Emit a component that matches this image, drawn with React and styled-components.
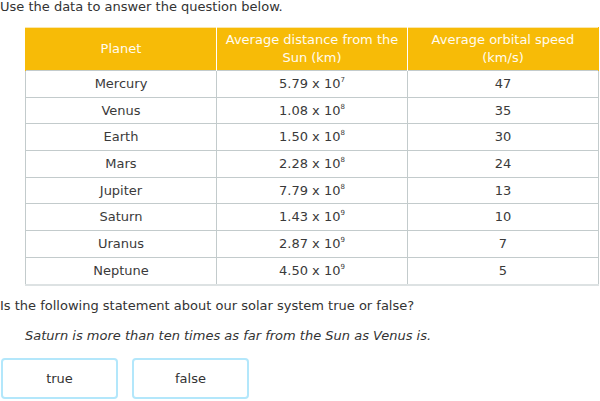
import React from "react";
import styled, { createGlobalStyle } from "styled-components";

const Global = createGlobalStyle`
  html, body { margin: 0; padding: 0; background: #fff; }
  body { font-family: "DejaVu Sans", Verdana, sans-serif; color: #333; }
`;

const Page = styled.div`
  width: 600px;
  height: 401px;
  overflow: hidden;
  font-size: 13px;
`;

const Prompt = styled.p`
  margin: 0;
  margin-top: -2px;
  line-height: 17px;
  padding-left: 0;
`;

const Table = styled.table`
  margin: 12px 0 0 25px;
  width: 574px;
  border-collapse: collapse;
  table-layout: fixed;
  border-bottom: 2px solid #dde2e3;
`;

const HeadCell = styled.th`
  background: #f7bb07;
  color: #fffcf0;
  font-weight: normal;
  height: 42px;
  padding: 0 8px;
  line-height: 18px;
  text-align: center;
  vertical-align: middle;
  border-top: 1px solid #fbe7ad;
  border-left: 1px solid #f7bb07;
  border-right: 1px solid ${(p) => (p.$last ? "#f7bb07" : "#fff")};
`;

const Cell = styled.td`
  height: 25.7px;
  padding: 0;
  text-align: center;
  vertical-align: middle;
  border: 1px solid #c3cbcc;
  color: #3a3a3a;
  line-height: 16px;
`;

const Sup = styled.sup`
  font-size: 7px;
  vertical-align: 6px;
  line-height: 0;
`;

const Question = styled.p`
  margin: 11px 0 0 0;
  line-height: 18px;
`;

const Statement = styled.p`
  margin: 12px 0 0 25px;
  font-style: italic;
  line-height: 18px;
`;

const Choices = styled.div`
  display: flex;
  gap: 14px;
  margin: 13px 0 0 1px;
`;

const Choice = styled.button`
  width: 117px;
  height: 41px;
  box-sizing: border-box;
  background: #fff;
  border: 2px solid #b3e7fb;
  border-radius: 4px;
  font-family: "DejaVu Sans", Verdana, sans-serif;
  font-size: 13px;
  color: #333;
  padding: 0;
  cursor: pointer;
`;

const rows = [
  ["Mercury", "5.79", "7", "47"],
  ["Venus", "1.08", "8", "35"],
  ["Earth", "1.50", "8", "30"],
  ["Mars", "2.28", "8", "24"],
  ["Jupiter", "7.79", "8", "13"],
  ["Saturn", "1.43", "9", "10"],
  ["Uranus", "2.87", "9", "7"],
  ["Neptune", "4.50", "9", "5"],
];

export default function App() {
  return (
    <Page>
      <Global />
      <Prompt>Use the data to answer the question below.</Prompt>
      <Table>
        <thead>
          <tr>
            <HeadCell>Planet</HeadCell>
            <HeadCell>Average distance from the Sun (km)</HeadCell>
            <HeadCell $last>Average orbital speed (km/s)</HeadCell>
          </tr>
        </thead>
        <tbody>
          {rows.map(([name, m, e, v]) => (
            <tr key={name}>
              <Cell>{name}</Cell>
              <Cell>
                {m} x 10<Sup>{e}</Sup>
              </Cell>
              <Cell>{v}</Cell>
            </tr>
          ))}
        </tbody>
      </Table>
      <Question>Is the following statement about our solar system true or false?</Question>
      <Statement>Saturn is more than ten times as far from the Sun as Venus is.</Statement>
      <Choices>
        <Choice>true</Choice>
        <Choice>false</Choice>
      </Choices>
    </Page>
  );
}
